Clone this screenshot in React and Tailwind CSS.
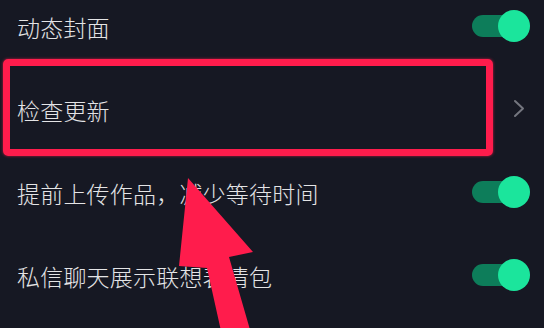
import React from "react";

const FONT = { fontFamily: '"Noto Sans CJK SC", "Noto Sans", sans-serif' };

function Toggle() {
  return (
    <div className="relative w-[58px] h-[32px] shrink-0">
      <div className="absolute left-0 top-[5px] w-[44px] h-[22px] rounded-full bg-[#0d7d5a]" />
      <div className="absolute right-0 top-0 w-[32px] h-[32px] rounded-full bg-[#1be59c]" />
    </div>
  );
}

function Chevron() {
  return (
    <svg width="12" height="19" viewBox="0 0 12 19" className="mr-[5px] shrink-0">
      <polyline points="2,2 10,9.5 2,17" fill="none" stroke="#74767f" strokeWidth="2" strokeLinecap="round" strokeLinejoin="round" />
    </svg>
  );
}

function Row({ label, right }) {
  return (
    <div className="h-[83px] flex items-center justify-between pl-[17px] pr-[14px]">
      <span className="text-[23px] font-light text-[#e4e4e6] leading-none pt-[4px] tracking-[0.2px]" style={FONT}>
        {label}
      </span>
      {right}
    </div>
  );
}

export default function App() {
  return (
    <div className="relative w-[544px] h-[328px] overflow-hidden bg-[#161823]">
      <div className="flex flex-col -mt-[16px]">
        <Row label="动态封面" right={<Toggle />} />
        <Row label="检查更新" right={<Chevron />} />
        <Row label="提前上传作品，减少等待时间" right={<Toggle />} />
        <Row label="私信聊天展示联想表情包" right={<Toggle />} />
      </div>
      <div className="absolute left-[3px] top-[59px] w-[490px] h-[97px] border-[7px] border-[#ff1c4c] rounded-[5px] shadow-[0_0_3px_rgba(255,28,76,0.7)]" />
      <svg className="absolute left-0 top-0" width="544" height="328" viewBox="0 0 544 328">
        <polygon
          points="188,178 253,252 229,257 253,340 223,340 207,268 179,266"
          fill="#ff1c4c"
          strokeLinejoin="round"
        />
      </svg>
    </div>
  );
}
